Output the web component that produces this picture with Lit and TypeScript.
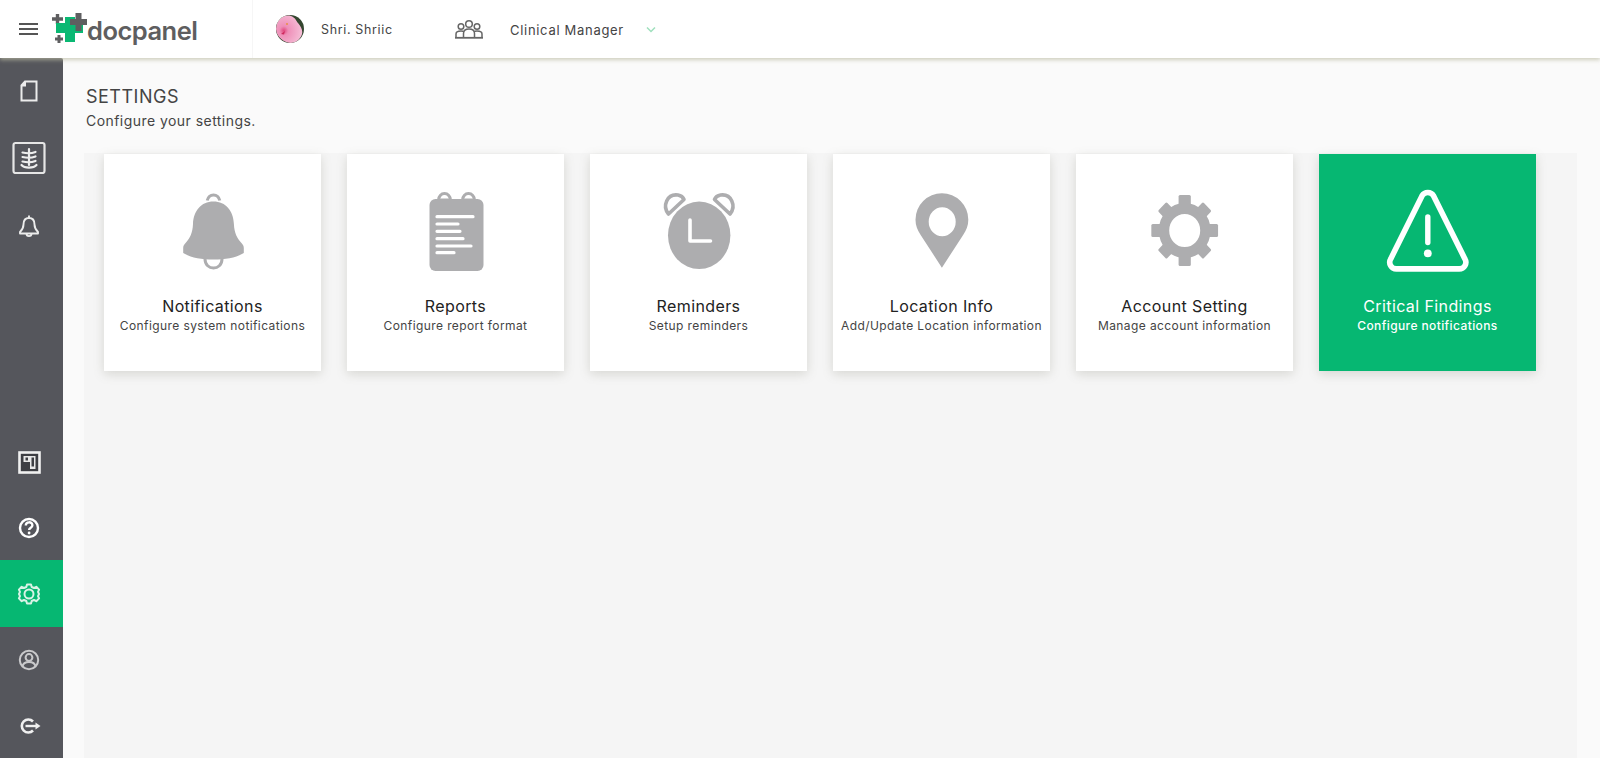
import { LitElement, html, css, svg } from 'lit';
import { customElement } from 'lit/decorators.js';

const GREY = '#adadaf';

const navTop = [
  svg`<path d="M13 7.500h11.500v19h-15v-15z M13 7.500v4H9.500" fill="none" stroke="#ececec" stroke-width="2"/>`,
  svg`<g transform="translate(0 1)">
        <rect x="1.500" y="2" width="31" height="30" rx="2" fill="none" stroke="#e6e6e6" stroke-width="2.200"/>
        <path d="M17 8v16 M10.500 11.500c4 1 9 1 13-.5 M10.500 16c4 1 9 1 13-.5 M10.500 20.500c4 1 9 1 13-.5 M9.500 24c3 3.500 12 3.500 15 0" fill="none" stroke="#eee" stroke-width="2.200" stroke-linecap="round"/>
      </g>`,
  svg`<g transform="translate(0 5)" fill="none" stroke="#ececec" stroke-width="1.900" stroke-linejoin="round">
        <path d="M17 7c-4 0-5.500 3-5.500 6.500 0 4-1.500 5.500-3.500 7.500v1.500h18V21c-2-2-3.500-3.500-3.500-7.500C22.500 10 21 7 17 7z"/>
        <path d="M17 4.500V7 M14.500 22.500c0 3.500 5 3.500 5 0"/>
      </g>`
];

const navBottom = [
  svg`<g transform="translate(0 2)">
        <rect x="7.500" y="6.500" width="20" height="20" fill="#3d3e43" stroke="#f0f0f0" stroke-width="2.600"/>
        <path d="M11.500 10h12v13H18v-7h-6.500z" fill="#e8e8e8"/>
        <path d="M13.500 11.500H16v3h-2.500z M19.500 11.500H22v9h-2.500z" fill="#3d3e43"/>
      </g>`,
  svg`<g transform="translate(0 1)">
        <circle cx="17" cy="17" r="9" fill="none" stroke="#fff" stroke-width="2.400"/>
        <path d="M13.800 14.500c0-4.200 6.600-4.200 6.600-.2 0 2.400-3.300 2.400-3.300 4.700" fill="none" stroke="#fff" stroke-width="2.400"/>
        <circle cx="17.100" cy="22" r="1.400" fill="#fff"/>
      </g>`,
  svg`<g transform="translate(17 17)" fill="none" stroke="#d8f3e6" stroke-width="2" stroke-linejoin="round">
        <path d="M-2-9.500h4l.7 2.500 2.300 1 2.300-1.200 2.800 2.800L9-2.100l1 2.100-1 2.100 1.100 2.300-2.800 2.800L5 6l-2.300 1-.7 2.500h-4L-2.700 7-5 6l-2.300 1.200-2.800-2.800L-9 2.100-10 0l1-2.100-1.100-2.300 2.800-2.800L-5-6l2.300-1z"/>
        <circle r="4.500"/>
      </g>`,
  svg`<g fill="none" stroke="#c9c9cb" stroke-width="2">
        <circle cx="17" cy="17" r="9.200"/>
        <circle cx="17" cy="14.500" r="3.400"/>
        <path d="M10.500 23.500c1-6 12-6 13 0"/>
      </g>`,
  svg`<path d="M21 12.500a6.500 6.500 0 1 0 0 9" fill="none" stroke="#f0f0f0" stroke-width="2.600"/>
      <path d="M13.500 17H24" stroke="#f0f0f0" stroke-width="2.400"/><path d="M23.500 13.500l5 3.500-5 3.500z" fill="#f0f0f0"/>`
];

const cardIcons = {
  bell: svg`
    <path d="M39.200 14.500a6.600 8 0 0 1 12.600 0" fill="none" stroke="${GREY}" stroke-width="3"/>
    <path d="M45.400 15.500C33 15.500 25.500 25 25 38c-.4 9-3 14-7 18.500-2 2.300-2.800 3.500-2.800 5.500v5c6.800 4.500 17.800 6.500 30.200 6.500 12.600 0 23.600-2 30.400-6.500v-5c0-2-.8-3.200-2.800-5.500-4-4.500-6.700-9.500-7.100-18.500-.5-13-7.900-22.500-20.500-22.500z" fill="${GREY}"/>
    <path d="M37 73c0 12 17 12 17 0" fill="none" stroke="${GREY}" stroke-width="3"/>`,
  report: svg`
    <path d="M27.500 14a6 6.500 0 0 1 12 0z M51.500 14a6 6.500 0 0 1 12 0z" fill="none" stroke="${GREY}" stroke-width="3"/>
    <path d="M24.500 13h42a6 6 0 0 1 6 6v60a6 6 0 0 1-6 6h-42a6 6 0 0 1-6-6V19a6 6 0 0 1 6-6z" fill="${GREY}"/>
    <path d="M26 30.700h36 M26 38h21 M26 45.300h23 M26 52.700h26 M26 60h34 M26 66.700h17" stroke="#fff" stroke-width="3.200" stroke-linecap="round"/>`,
  alarm: svg`
    <ellipse cx="45.200" cy="49.300" rx="31.200" ry="33.700" fill="${GREY}"/>
    <path d="M36 34v21h20.500" fill="none" stroke="#fff" stroke-width="3.600" stroke-linecap="round" stroke-linejoin="round"/>
    <path d="M14.500 28C8 20 13 7.500 24 9c3 .5 5 2 6 4.500z M76 28c6.500-8 1.500-20.500-9.500-19-3 .5-5 2-6 4.500z" fill="none" stroke="${GREY}" stroke-width="3.600" stroke-linejoin="round"/>`,
  pin: svg`
    <path fill-rule="evenodd" fill="${GREY}" d="M44.900 7.300a26.400 26.400 0 0 1 26.400 26.400c0 6-2 10.500-5 15L44.900 81.700 23.500 48.700c-3-4.500-5-9-5-15A26.400 26.400 0 0 1 44.900 7.300z M45.200 21.200a13.500 14.500 0 1 0 0 29 13.500 14.500 0 0 0 0-29z"/>`,
  gear: svg`
    <g transform="translate(44.700 44.500) scale(.94 1)" fill="${GREY}">
      <circle r="22" fill="none" stroke="${GREY}" stroke-width="11"/>
      ${[0, 45, 90, 135, 180, 225, 270, 315].map(
        (a) => svg`<rect x="-6.500" y="${a % 90 ? -34 : -35.5}" width="13" height="12" rx="1.500" transform="rotate(${a})"/>`
      )}
    </g>`,
  warn: svg`
    <g transform="translate(-.7 0)">
      <path d="M39.800 9.700a6.600 6.600 0 0 1 11.400 0L82.600 72.900a6.600 6.600 0 0 1-5.700 10H14.100a6.600 6.600 0 0 1-5.700-10z" fill="none" stroke="#fff" stroke-width="5.600" stroke-linejoin="round"/>
      <path d="M45.500 31v25.500" stroke="#fff" stroke-width="5.400" stroke-linecap="round"/>
      <circle cx="45.500" cy="67.300" r="3.900" fill="#fff"/>
    </g>`
};

const cards = [
  { icon: cardIcons.bell, title: 'Notifications', sub: 'Configure system notifications' },
  { icon: cardIcons.report, title: 'Reports', sub: 'Configure report format' },
  { icon: cardIcons.alarm, title: 'Reminders', sub: 'Setup reminders' },
  { icon: cardIcons.pin, title: 'Location Info', sub: 'Add/Update Location information' },
  { icon: cardIcons.gear, title: 'Account Setting', sub: 'Manage account information' },
  { icon: cardIcons.warn, title: 'Critical Findings', sub: 'Configure notifications', active: true }
];

@customElement('app-root')
export class AppRoot extends LitElement {
  static styles = css`
    :host {
      display: flex;
      flex-direction: column;
      height: 100vh;
      overflow: hidden;
      background: #fafafa;
      font-family: Inter, 'Open Sans', sans-serif;
      color: #333;
    }

    .topbar {
      display: flex;
      align-items: center;
      flex: none;
      height: 58px;
      background: #fff;
      box-shadow: 0 2px 4px rgba(190, 190, 165, 0.7);
      position: relative;
      z-index: 2;
    }

    .brand {
      display: flex;
      align-items: center;
      width: 253px;
      height: 100%;
      box-sizing: border-box;
      padding-left: 19px;
      border-right: 1px solid #f6f6f6;
    }

    .burger {
      width: 19px;
      height: 12px;
      border-top: 2px solid #555;
      border-bottom: 2px solid #555;
      box-sizing: border-box;
      position: relative;
      margin-right: 12px;
    }

    .burger::after {
      content: '';
      position: absolute;
      left: 0;
      right: 0;
      top: 3px;
      height: 2px;
      background: #555;
    }

    .wordmark {
      margin: 2px 0 0 -1px;
      font-size: 25.500px;
      font-weight: 600;
      letter-spacing: -0.5px;
      color: #5e5e60;
    }

    .avatar {
      margin-left: 23px;
      display: block;
    }

    .name {
      margin-left: 17px;
      font-size: 12.500px;
      letter-spacing: 0.65px;
      color: #444;
      width: 64px;
      white-space: nowrap;
    }

    .group-icon {
      margin-left: 69px;
    }

    .role {
      margin: 1px 0 0 26px;
      font-size: 13px;
      letter-spacing: 0.7px;
      color: #444;
      white-space: nowrap;
    }

    .chevron {
      margin-left: 22px;
    }

    .body {
      display: flex;
      flex: 1;
      min-height: 0;
    }

    .sidebar {
      display: flex;
      flex-direction: column;
      justify-content: space-between;
      flex: none;
      width: 63px;
      background: #55565c;
      border-top-right-radius: 2px;
    }

    .nav-item {
      display: flex;
      align-items: center;
      justify-content: center;
      box-sizing: border-box;
      height: 66px;
      padding-right: 6px;
    }

    .nav-item:last-child {
      height: 65px;
    }

    .bottom .nav-item.active {
      height: 67px;
      background: #06b772;
    }

    .nav-item svg {
      display: block;
    }

    .main {
      display: flex;
      flex-direction: column;
      flex: 1;
      min-width: 0;
      padding: 0 23px 0 21px;
    }

    .head {
      flex: none;
      height: 95px;
      box-sizing: border-box;
      padding: 28px 0 0 2px;
    }

    h1 {
      margin: 0;
      font-size: 18px;
      line-height: 22px;
      font-weight: 400;
      letter-spacing: 0.5px;
      color: #444;
    }

    .head p {
      margin: 4px 0 0;
      font-size: 14px;
      line-height: 18px;
      letter-spacing: 0.45px;
      color: #444;
    }

    .panel {
      flex: 1;
      background: #f5f5f5;
      padding: 1px 20px 0;
      display: grid;
      grid-template-columns: repeat(6, 217px);
      grid-auto-rows: 217px;
      column-gap: 26px;
    }

    .card {
      display: flex;
      flex-direction: column;
      align-items: center;
      background: #fff;
      padding-top: 32px;
      box-sizing: border-box;
      box-shadow: 0 3px 10px rgba(110, 110, 90, 0.22);
      text-align: center;
    }

    .card.active {
      background: #06b772;
      color: #fff;
    }

    .card svg {
      display: block;
    }

    .title {
      margin-top: 20px;
      font-size: 16px;
      line-height: 21px;
      letter-spacing: 0.4px;
      color: #222;
    }

    .sub {
      margin-top: 1px;
      font-size: 12px;
      line-height: 16px;
      letter-spacing: 0.4px;
      color: #444;
      white-space: nowrap;
    }

    .card.active .title,
    .card.active .sub {
      color: #fff;
    }

    .card.active .sub {
      font-weight: 500;
    }
  `;

  renderNav(icon: unknown, active = false) {
    return html`
      <div class="nav-item ${active ? 'active' : ''}">
        <svg width="34" height="34" viewBox="0 0 34 34">${icon}</svg>
      </div>
    `;
  }

  render() {
    return html`
      <header class="topbar">
        <div class="brand">
          <div class="burger"></div>
          <svg width="38" height="34" viewBox="0 0 38 34">
            <path d="M2 7h11 M7.500 2v10" stroke="#5e5e60" stroke-width="3.400"/>
            <path d="M15 5h10v6h8v10h-8v9H15v-9H6V11h9z" fill="#0ab873"/>
            <path d="M25.500 1h6v6h5.500v6h-5.500v6h-6v-6H20V7h5.500z" fill="#5e5e60"/>
            <path d="M5 27h8 M9 23v8" stroke="#5e5e60" stroke-width="3"/>
          </svg>
          <span class="wordmark">docpanel</span>
        </div>
        <svg class="avatar" width="28" height="28" viewBox="0 0 28 28">
          <defs>
            <clipPath id="av"><circle cx="14" cy="14" r="14"/></clipPath>
            <radialGradient id="petal" cx="30%" cy="55%" r="75%">
              <stop offset="0" stop-color="#e0487e"/>
              <stop offset=".22" stop-color="#ee8fb8"/>
              <stop offset="1" stop-color="#f6c3da"/>
            </radialGradient>
          </defs>
          <g clip-path="url(#av)">
            <rect width="28" height="28" fill="#34452f"/>
            <path d="M0 0h9L0 9z" fill="#c9dcc0"/>
            <path d="M0 14C0 5 7-1 15 1c5 2 5 5 7 7 3 4 5 7 4 11s-5 9-11 9S0 22 0 14z" fill="url(#petal)"/>
            <path d="M9 16l-4 3 3 .5z" fill="#cf2a5e"/>
            <circle cx="11" cy="9" r="1.100" fill="#e8904c"/>
          </g>
        </svg>
        <span class="name">Shri. Shriic</span>
        <svg class="group-icon" width="30" height="20" viewBox="0 0 30 20" fill="none" stroke="#666" stroke-width="1.500">
          <circle cx="15" cy="5" r="3.300"/><circle cx="7" cy="7.500" r="2.800"/><circle cx="23" cy="7.500" r="2.800"/>
          <path d="M2 18.500v-3.500c0-2 2-3 5-3 1.500 0 2.500.3 3.500 1 M28 18.500v-3.500c0-2-2-3-5-3-1.500 0-2.500.3-3.500 1 M9.500 18.500v-4c0-3 2.500-4.500 5.500-4.500s5.500 1.500 5.500 4.500v4"/>
          <path d="M1 18.800h28" stroke-width="1.800"/>
        </svg>
        <span class="role">Clinical Manager</span>
        <svg class="chevron" width="10" height="7" viewBox="0 0 10 7"><path d="M1 1.500l4 4 4-4" fill="none" stroke="#9fe0bd" stroke-width="1.500"/></svg>
      </header>
      <div class="body">
        <nav class="sidebar">
          <div class="top">${navTop.map((i) => this.renderNav(i))}</div>
          <div class="bottom">${navBottom.map((i, n) => this.renderNav(i, n === 2))}</div>
        </nav>
        <main class="main">
          <div class="head">
            <h1>SETTINGS</h1>
            <p>Configure your settings.</p>
          </div>
          <section class="panel">
            ${cards.map(
              (c) => html`
                <div class="card ${c.active ? 'active' : ''}">
                  <svg width="90" height="90" viewBox="0 0 90 90">${c.icon}</svg>
                  <div class="title">${c.title}</div>
                  <div class="sub">${c.sub}</div>
                </div>
              `
            )}
          </section>
        </main>
      </div>
    `;
  }
}
